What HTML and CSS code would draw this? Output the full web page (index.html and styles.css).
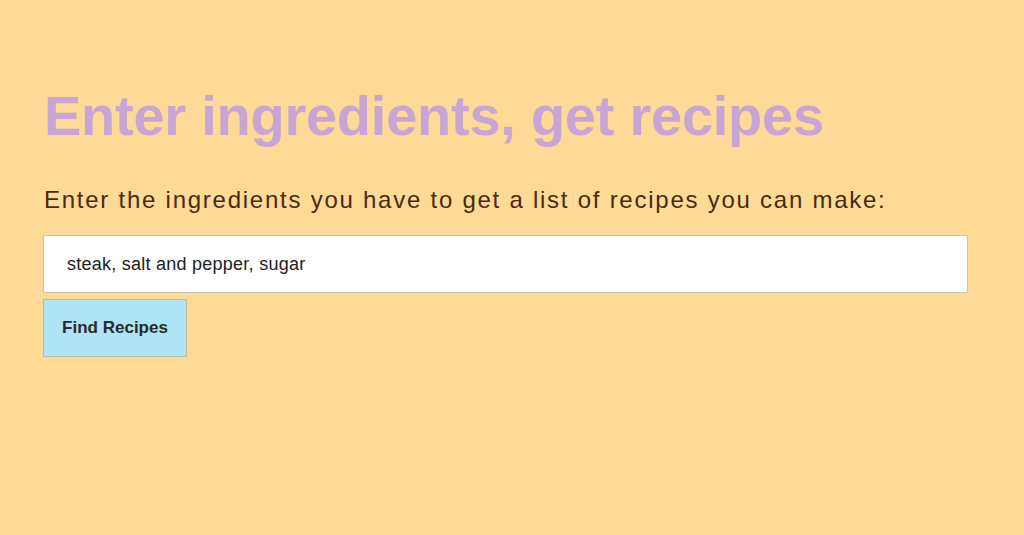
FILE: index.html
```html
<!DOCTYPE html>
<html lang="en">
<head>
  <meta charset="UTF-8">
  <meta name="viewport" content="width=device-width, initial-scale=1.0">
  <title>Recipe Finder</title>
  <link rel="stylesheet" href="styles.css">
</head>
<body>

<main class="finder">
  <h1 class="finder-title">Enter ingredients, get recipes</h1>
  <p class="finder-intro">Enter the ingredients you have to get a list of recipes you can make:</p>
  <form class="finder-form" onsubmit="return false;">
    <input class="finder-input" type="text" value="steak, salt and pepper, sugar">
    <button class="finder-button" type="submit">Find Recipes</button>
  </form>
</main>

</body>
</html>
```

FILE: styles.css
```css
/* Basic reset */
body, html {
  margin: 0;
  padding: 0;
  font-family: 'Liberation Sans', Arial, sans-serif;
}

*, *::before, *::after {
  box-sizing: border-box;
}

body {
  background: #FDDA95;
  min-height: 100vh;
}

/* Main content */
.finder {
  padding: 84px 56px 40px 43px;
}

.finder-title {
  margin: 0 0 0 1px;
  font-size: 56px;
  font-weight: 700;
  line-height: 64px;
  color: #C9A5D6;
  letter-spacing: -0.25px;
}

.finder-intro {
  margin: 37px 0 20px 1px;
  font-size: 24px;
  line-height: 30px;
  letter-spacing: 1.75px;
  color: #4B2A12;
}

/* Form */
.finder-form {
  display: flex;
  flex-direction: column;
  align-items: flex-start;
  gap: 6px;
}

.finder-input {
  width: 100%;
  height: 58px;
  padding: 0 23px;
  font-family: inherit;
  font-size: 18px;
  letter-spacing: 0.25px;
  color: #222;
  background: #FFFFFF;
  border: 1px solid #C9C2B8;
  border-radius: 2px;
}

.finder-button {
  width: 144px;
  height: 58px;
  font-family: inherit;
  font-size: 17px;
  font-weight: 700;
  color: #2A2A2A;
  background: #AEE4F6;
  border: 1px solid #BDB9B0;
  cursor: pointer;
}
```
